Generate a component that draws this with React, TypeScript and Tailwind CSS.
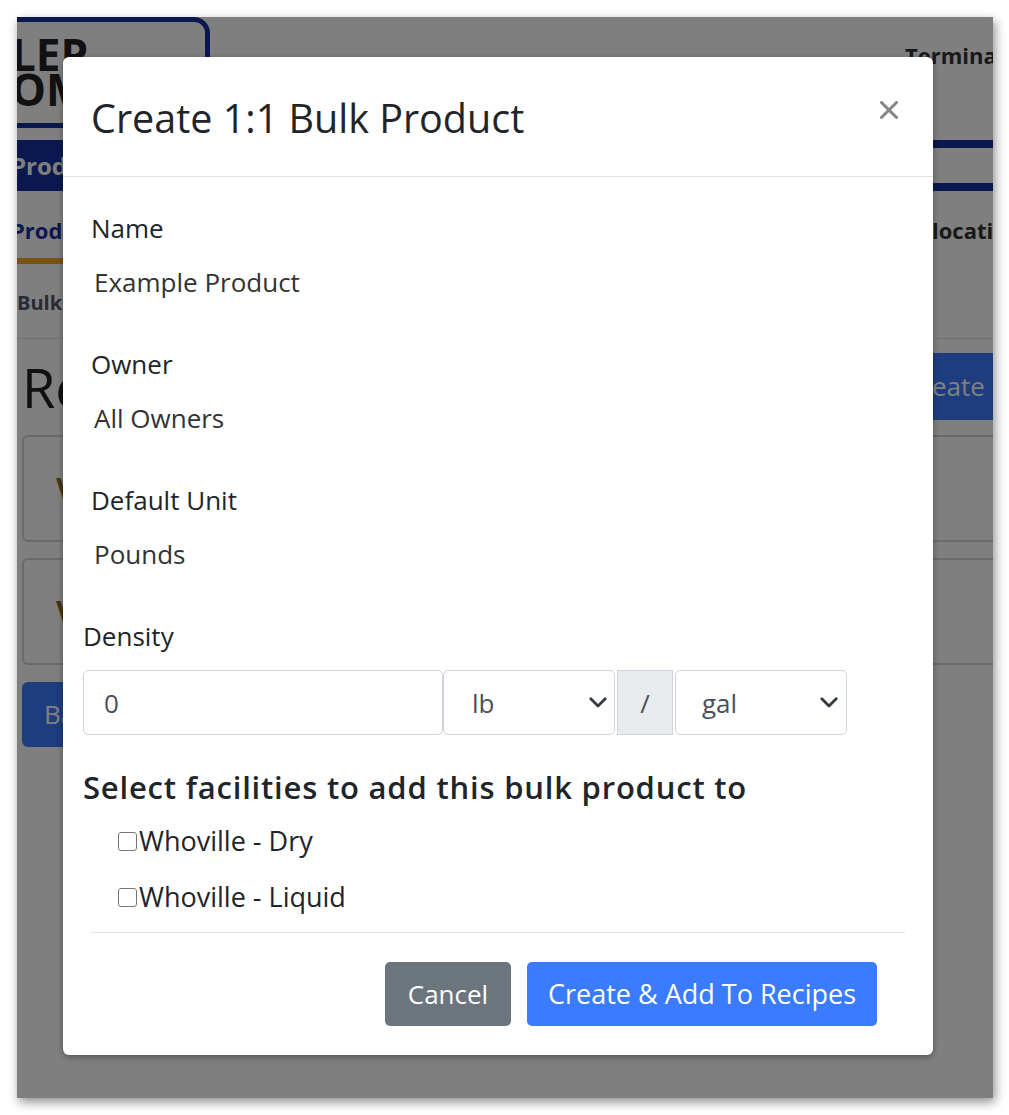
import React from "react";

function Chevron() {
  return (
    <svg width="18" height="11" viewBox="0 0 18 11" fill="none">
      <path d="M1.8 1.8 L9 9 L16.2 1.8" stroke="#343a40" strokeWidth="2.8" strokeLinecap="round" strokeLinejoin="round" />
    </svg>
  );
}

function Checkbox() {
  return <span className="inline-block w-[19px] h-[19px] rounded-[3px] border-[1.5px] border-[#767676] bg-white shrink-0" />;
}

export default function App() {
  return (
    <div className="w-[1009px] h-[1115px] bg-white p-[17px] font-['Open_Sans',sans-serif]">
      <div className="relative w-[976px] h-[1081px] overflow-hidden bg-white shadow-[2px_4px_10px_rgba(0,0,0,0.45)]">
        {/* Background page */}
        <div className="flex flex-col">
          <div className="flex h-[111px] items-start">
            <div className="-ml-[40px] h-[111px] w-[233px] shrink-0 rounded-[16px] border-[5px] border-[#17319e] pl-[29px] pt-[15px] text-[44px] font-bold leading-[35px] text-[#222]">
              <div>LEP</div>
              <div>OM</div>
            </div>
            <div className="ml-[695px] mt-[22px] whitespace-nowrap text-[22px] font-bold text-[#333]">Terminal</div>
          </div>
          <div className="mt-[12px] flex h-[51px] border-y-[8px] border-[#17319e]">
            <div className="-ml-[6px] flex h-full items-center bg-[#17319e] pl-0 pr-[30px] text-[24px] font-bold text-white">Products</div>
          </div>
          <div className="flex h-[73px] items-start">
            <div className="-ml-[6px] w-[200px] shrink-0 border-b-[6px] border-[#f5a623] pb-[13px] pt-[24px] text-[22px] font-bold leading-[30px] text-[#17319e]">Products</div>
            <div className="ml-[721px] pt-[24px] whitespace-nowrap text-[22px] font-bold leading-[30px] text-[#333]">locations</div>
          </div>
          <div className="border-b-[1px] border-[#e4e4e4] pb-[21px] pt-[25px] text-[20px] font-bold leading-[28px] text-[#50586f]">Bulk Products</div>
          <div className="mt-[14px] flex h-[67px] items-center">
            <div className="pl-[5px] text-[54px] leading-[60px] text-[#222]">Recipes</div>
            <div className="ml-auto -mr-[20px] flex h-full w-[130px] items-center rounded-[6px] bg-[#3b7bfd] pl-[22px] text-[26px] text-white">Create</div>
          </div>
          <div className="ml-[5px] -mr-[10px] mt-[15px] flex h-[107px] items-center rounded-[6px] border-[2px] border-[#d4d4d4] pl-[32px] text-[30px] font-bold text-[#8a6d1f]">V</div>
          <div className="ml-[5px] -mr-[10px] mt-[16px] flex h-[107px] items-center rounded-[6px] border-[2px] border-[#d4d4d4] pl-[32px] text-[30px] font-bold text-[#8a6d1f]">V</div>
          <div className="ml-[5px] mt-[17px] flex h-[65px] w-[110px] items-center rounded-[6px] bg-[#3b7bfd] pl-[22px] text-[26px] text-white">Back</div>
        </div>

        {/* Backdrop */}
        <div className="absolute inset-0 bg-black/50" />

        {/* Modal */}
        <div className="absolute left-[46px] top-[40px] w-[870px] rounded-[6px] bg-white shadow-[0_2px_6px_rgba(0,0,0,0.35)] text-[#212529]">
          <div className="flex h-[120px] items-start justify-between border-b border-[#dee2e6] pl-[28px] pr-[35px]">
            <div className="mt-[37px] text-[39.5px] font-medium leading-[48px]">Create 1:1 Bulk Product</div>
            <button className="mt-[44px]">
              <svg width="18" height="18" viewBox="0 0 18 18">
                <path d="M1.5 1.5 L16.5 16.5 M16.5 1.5 L1.5 16.5" stroke="#858585" strokeWidth="3" strokeLinecap="round" />
              </svg>
            </button>
          </div>

          <div className="px-[20px] pt-[33px] pb-[29px] text-[26px] leading-[36px]">
            <div className="pl-[8px]">
              <div>Name</div>
              <div className="mt-[18px] pl-[3px] text-[#333]">Example Product</div>
            </div>
            <div className="mt-[46px] pl-[8px]">
              <div>Owner</div>
              <div className="mt-[18px] pl-[3px] text-[#333]">All Owners</div>
            </div>
            <div className="mt-[46px] pl-[8px]">
              <div>Default Unit</div>
              <div className="mt-[18px] pl-[3px] text-[#333]">Pounds</div>
            </div>
            <div className="mt-[46px]">Density</div>
            <div className="mt-[16px] flex h-[65px] w-[764px] gap-[2px] text-[#495057]">
              <div className="flex h-full w-[360px] items-center rounded-[5px] border border-[#ced4da] pl-[20px]">0</div>
              <div className="-ml-[2px] flex h-full w-[172px] items-center justify-between rounded-[5px] border border-[#ced4da] pl-[28px] pr-[7px]">
                <span>lb</span>
                <Chevron />
              </div>
              <div className="flex h-full w-[56px] items-center justify-center border border-[#ced4da] bg-[#e9ecef]">/</div>
              <div className="flex h-full w-[172px] items-center justify-between rounded-[5px] border border-[#ced4da] pl-[26px] pr-[8px]">
                <span>gal</span>
                <Chevron />
              </div>
            </div>
            <div className="mt-[30px] text-[31px] font-semibold leading-[44px] tracking-[0.8px]">Select facilities to add this bulk product to</div>
            <div className="mt-[14px] flex items-center pl-[35px] text-[27px]">
              <Checkbox />
              <span className="pl-[2px]">Whoville - Dry</span>
            </div>
            <div className="mt-[20px] flex items-center pl-[35px] text-[27px]">
              <Checkbox />
              <span className="pl-[2px]">Whoville - Liquid</span>
            </div>
            <div className="mx-[8px] mt-[17px] h-px bg-[#dee2e6]" />
            <div className="mt-[29px] flex justify-end gap-[16px] pr-[36px]">
              <button className="flex h-[64px] w-[126px] items-center justify-center rounded-[5px] bg-[#6c757d] text-[26px] text-white">Cancel</button>
              <button className="flex h-[64px] w-[350px] items-center justify-center rounded-[5px] bg-[#3b7bfd] text-[27px] text-white">Create &amp; Add To Recipes</button>
            </div>
          </div>
        </div>
      </div>
    </div>
  );
}
